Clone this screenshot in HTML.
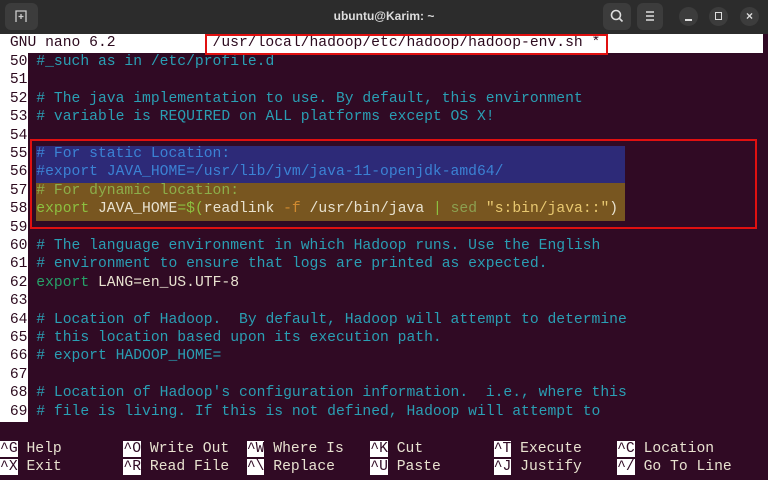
<!DOCTYPE html>
<html><head><meta charset="utf-8"><style>
*{margin:0;padding:0;box-sizing:border-box}
body{width:768px;height:480px;overflow:hidden;background:#300a24;font-family:"Liberation Mono",monospace;position:relative}
#tb{position:absolute;left:0;top:0;width:768px;height:34px;background:#2c2c2c}
#tb .t{position:absolute;left:0;width:768px;top:9px;text-align:center;color:#ddd;font:bold 12px "Liberation Sans",sans-serif}
.btn{position:absolute;top:3px;width:28px;height:27px;background:#3c3c3c;border-radius:6px}
.cir{position:absolute;top:7px;width:19px;height:19px;border-radius:50%;background:#3c3c3c}
#hdr{position:absolute;left:0;top:34px;width:763px;height:19px;background:#fff}
#ln{position:absolute;left:0;top:53px;width:28px;height:369px;background:#fff}
.row{position:absolute;left:1px;height:18.4px;line-height:18.4px;font-size:14.7px;white-space:pre;color:#fff}
.n{color:#2c0a1e}
.c{color:#2a9fb4}
.e{color:#26a269}
.w{color:#e8e2d0}
.k{background:#fff;color:#300a24}
.hb{position:absolute;left:36px;width:589px}
.box{position:absolute;border:2px solid #e01010}
</style></head><body>
<div id="tb">
<div class="btn" style="left:5px;width:33px"></div>
<svg style="position:absolute;left:14px;top:9px" width="14" height="14" viewBox="0 0 14 14" fill="none" stroke="#ccc" stroke-width="1.3"><path d="M2 13V2h10v11"/><path d="M7 5v5M4.5 7.5h5"/></svg>
<div class="t">ubuntu@Karim: ~</div>
<div class="btn" style="left:603px"></div>
<svg style="position:absolute;left:609px;top:8px" width="16" height="16" viewBox="0 0 16 16" fill="none" stroke="#ddd" stroke-width="1.6"><circle cx="7" cy="7" r="4.5"/><path d="M10.5 10.5l3 3"/></svg>
<div class="btn" style="left:637px;width:26px"></div>
<svg style="position:absolute;left:644px;top:10px" width="12" height="12" viewBox="0 0 12 12" stroke="#ddd" stroke-width="1.4"><path d="M2 2h8M2 6h8M2 10h8"/></svg>
<div class="cir" style="left:679px"></div>
<div style="position:absolute;left:685px;top:19px;width:7px;height:1.5px;background:#ddd"></div>
<div class="cir" style="left:709px"></div>
<div style="position:absolute;left:715px;top:12px;width:7px;height:8px;border:1.5px solid #ddd"></div>
<div class="cir" style="left:740px"></div>
<div style="position:absolute;left:740px;top:7px;width:19px;height:19px;color:#ddd;font:bold 12px 'Liberation Sans';text-align:center;line-height:19px">×</div>
</div>
<div id="hdr"></div>
<div id="ln"></div>
<div class="hb" style="top:146px;height:37px;background:#2d2a78"></div>
<div class="hb" style="top:183px;height:38px;background:#785620"></div>
<div class="row n" style="top:34px"> GNU nano 6.2           /usr/local/hadoop/etc/hadoop/hadoop-env.sh *</div>
<div class="row" style="top:53px"><span class="n"> 50</span> <span class="c">#_such as in /etc/profile.d</span></div>
<div class="row" style="top:71.4px"><span class="n"> 51</span></div>
<div class="row" style="top:89.8px"><span class="n"> 52</span> <span class="c"># The java implementation to use. By default, this environment</span></div>
<div class="row" style="top:108.2px"><span class="n"> 53</span> <span class="c"># variable is REQUIRED on ALL platforms except OS X!</span></div>
<div class="row" style="top:126.6px"><span class="n"> 54</span></div>
<div class="row" style="top:145px"><span class="n"> 55</span> <span style="color:#3b82d4"># For static Location:</span></div>
<div class="row" style="top:163.4px"><span class="n"> 56</span> <span style="color:#3b82d4">#export JAVA_HOME=/usr/lib/jvm/java-11-openjdk-amd64/</span></div>
<div class="row" style="top:181.8px"><span class="n"> 57</span> <span style="color:#8cae4a"># For dynamic location:</span></div>
<div class="row" style="top:200.2px"><span class="n"> 58</span> <span style="color:#8cc040">export</span><span class="w"> JAVA_HOME</span><span style="color:#8cc040">=$(</span><span class="w">readlink </span><span style="color:#d08a30">-f</span><span class="w"> /usr/bin/java </span><span style="color:#8cc040">|</span> <span style="color:#8ca050">sed</span> <span style="color:#e8c870">"s:bin/java::"</span><span class="w">)</span></div>
<div class="row" style="top:218.6px"><span class="n"> 59</span></div>
<div class="row" style="top:237px"><span class="n"> 60</span> <span class="c"># The language environment in which Hadoop runs. Use the English</span></div>
<div class="row" style="top:255.4px"><span class="n"> 61</span> <span class="c"># environment to ensure that logs are printed as expected.</span></div>
<div class="row" style="top:273.8px"><span class="n"> 62</span> <span class="e">export</span><span class="w"> LANG=en_US.UTF-8</span></div>
<div class="row" style="top:292.2px"><span class="n"> 63</span></div>
<div class="row" style="top:310.6px"><span class="n"> 64</span> <span class="c"># Location of Hadoop.  By default, Hadoop will attempt to determine</span></div>
<div class="row" style="top:329px"><span class="n"> 65</span> <span class="c"># this location based upon its execution path.</span></div>
<div class="row" style="top:347.4px"><span class="n"> 66</span> <span class="c"># export HADOOP_HOME=</span></div>
<div class="row" style="top:365.8px"><span class="n"> 67</span></div>
<div class="row" style="top:384.2px"><span class="n"> 68</span> <span class="c"># Location of Hadoop's configuration information.  i.e., where this</span></div>
<div class="row" style="top:402.6px"><span class="n"> 69</span> <span class="c"># file is living. If this is not defined, Hadoop will attempt to</span></div>
<div class="row w" style="top:440px;left:0"><span class="k">^G</span> Help       <span class="k">^O</span> Write Out  <span class="k">^W</span> Where Is   <span class="k">^K</span> Cut        <span class="k">^T</span> Execute    <span class="k">^C</span> Location</div>
<div class="row w" style="top:458.4px;left:0"><span class="k">^X</span> Exit       <span class="k">^R</span> Read File  <span class="k">^\</span> Replace    <span class="k">^U</span> Paste      <span class="k">^J</span> Justify    <span class="k">^/</span> Go To Line</div>
<div class="box" style="left:205px;top:34px;width:403px;height:21px"></div>
<div class="box" style="left:30px;top:139px;width:727px;height:90px"></div>
</body></html>
